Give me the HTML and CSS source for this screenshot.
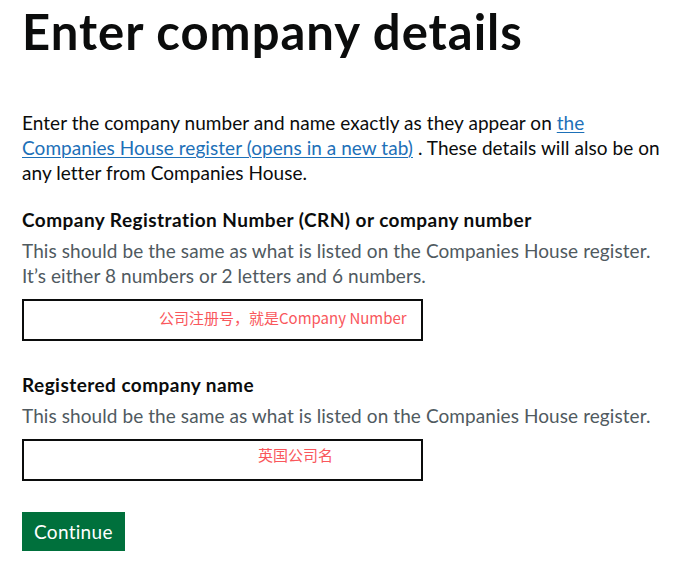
FILE: index.html
```html
<!DOCTYPE html>
<html lang="en">
<head>
<meta charset="utf-8">
<title>Enter company details</title>
<link rel="stylesheet" href="styles.css">
</head>
<body>
<main class="page">
  <h1 class="heading">Enter company details</h1>
  <p class="body">Enter the company number and name exactly as they appear on <a class="link" href="#">the Companies House register (opens in a new tab)</a> . These details will also be on any letter from Companies House.</p>
  <div class="group">
    <label class="label">Company Registration Number (CRN) or company number</label>
    <div class="hint">This should be the same as what is listed on the Companies House register. It’s either 8 numbers or 2 letters and 6 numbers.</div>
    <div class="input"><span class="note note-crn">公司注册号，就是Company Number</span></div>
  </div>
  <div class="group">
    <label class="label">Registered company name</label>
    <div class="hint">This should be the same as what is listed on the Companies House register.</div>
    <div class="input"><span class="note note-name">英国公司名</span></div>
  </div>
  <button class="button" type="button">Continue</button>
</main>
</body>
</html>
```

FILE: styles.css
```css
html, body {
  margin: 0;
  padding: 0;
  background: #ffffff;
}
.page {
  padding: 6px 0 0 22px;
  width: 655px;
  font-family: Lato, "Liberation Sans", sans-serif;
  color: #0b0c0c;
}
.heading {
  margin: 0 0 54px 0;
  font-size: 49px;
  line-height: 50px;
  font-weight: 700;
  letter-spacing: 1px;
}
.body {
  margin: 0 0 22px 0;
  font-size: 19px;
  line-height: 25px;
  letter-spacing: 0.05px;
}
.link {
  color: #1d70b8;
  text-decoration: underline;
  text-decoration-thickness: 1px;
  text-underline-offset: 2px;
}
.group {
  margin-bottom: 31px;
}
.label {
  display: block;
  font-size: 19px;
  line-height: 25px;
  font-weight: 700;
  letter-spacing: 0.45px;
  margin-bottom: 6px;
}
.hint {
  font-size: 19px;
  line-height: 25px;
  color: #505a5f;
  letter-spacing: 0.08px;
  margin-bottom: 11px;
}
.input {
  box-sizing: border-box;
  width: 401px;
  height: 42px;
  border: 2px solid #0b0c0c;
  display: flex;
  align-items: center;
}
.note {
  color: #f9575c;
  font-size: 15px;
  line-height: 20px;
  white-space: nowrap;
  font-family: "Noto Sans CJK SC", "Noto Sans", sans-serif;
}
.note-crn {
  padding-left: 135px;
  margin-top: -4px;
}
.note-name {
  padding-left: 234px;
  margin-top: -10px;
}
.button {
  display: block;
  margin: 0;
  padding: 8px 12px 7px;
  height: 39px;
  border: 0;
  background: #00703c;
  color: #ffffff;
  font-family: Lato, "Liberation Sans", sans-serif;
  font-size: 19px;
  line-height: 24px;
  letter-spacing: 0.3px;
  box-shadow: 0 2px 0 #002d18;
  border-radius: 0;
}
```
